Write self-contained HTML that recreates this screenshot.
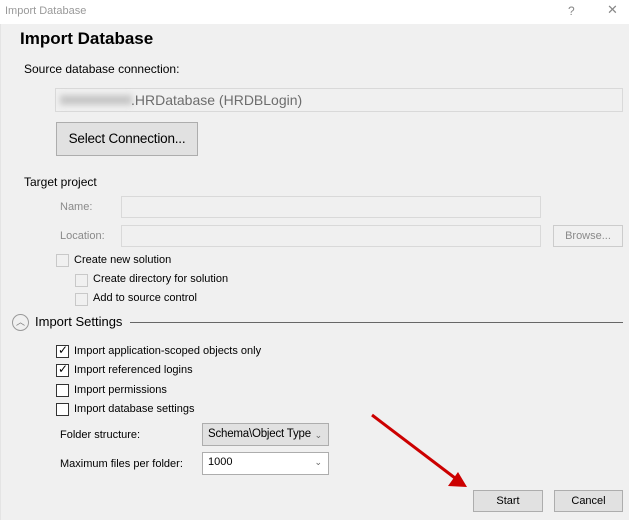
<!DOCTYPE html><html><head><style>
body{margin:0;width:631px;height:520px;background:#fff;font-family:"Liberation Sans",sans-serif;font-size:12px;color:#000;position:relative;overflow:hidden}
div,span{position:absolute;box-sizing:border-box}
.t{white-space:nowrap;line-height:14px}
.g{color:#8a8a8a}
.in{border:1px solid #d9d9d9;background:#f0f0f0}
.btn{border:1px solid #adadad;background:#e1e1e1;text-align:center}
.cb{width:13px;height:13px;border:1px solid #333;background:#fff}
.cbd{width:13px;height:13px;border:1px solid #c8c8c8;background:#f0f0f0}
</style></head><body>
<div class="t g" style="left:5px;top:4px;font-size:11px;color:#999">Import Database</div>
<div class="t" style="left:568px;top:4px;color:#888">?</div>
<div class="t" style="left:607px;top:3px;color:#888;font-size:13px">✕</div>
<div style="left:0;top:24px;width:629px;height:496px;background:#f0f0f0;border-left:1px solid #e4e4e4"></div>
<div class="t" style="left:20px;top:29px;font-size:17px;font-weight:bold;line-height:20px">Import Database</div>
<div class="t" style="left:24px;top:62px">Source database connection:</div>
<div class="in" style="left:55px;top:88px;width:568px;height:24px"></div>
<div style="left:60px;top:95px;width:72px;height:10px;background:#c8c8c8;filter:blur(3px)"></div>
<div class="t" style="left:131px;top:92px;font-size:14px;line-height:16px;color:#6d6d6d">.HRDatabase (HRDBLogin)</div>
<div class="btn" style="left:56px;top:122px;width:142px;height:34px;line-height:32px;font-size:13.5px;letter-spacing:-0.2px">Select Connection...</div>
<div class="t" style="left:24px;top:175px">Target project</div>
<div class="t g" style="left:60px;top:200px;font-size:11px">Name:</div>
<div class="in" style="left:121px;top:196px;width:420px;height:22px"></div>
<div class="t g" style="left:60px;top:229px;font-size:11px">Location:</div>
<div class="in" style="left:121px;top:225px;width:420px;height:22px"></div>
<div class="in t g" style="left:553px;top:225px;width:70px;height:22px;line-height:20px;text-align:center;font-size:11px;border-color:#ccc">Browse...</div>
<div class="cbd" style="left:56px;top:254px"></div><div class="t" style="left:74px;top:253px;font-size:11px">Create new solution</div>
<div class="cbd" style="left:75px;top:274px"></div><div class="t" style="left:93px;top:272px;font-size:11px">Create directory for solution</div>
<div class="cbd" style="left:75px;top:293px"></div><div class="t" style="left:93px;top:291px;font-size:11px">Add to source control</div>
<div style="left:12px;top:314px;width:17px;height:17px;border:1px solid #999;border-radius:50%;font-size:9px;color:#777;text-align:center;line-height:15px">︿</div>
<div class="t" style="left:35px;top:315px;font-size:13px">Import Settings</div>
<div style="left:130px;top:322px;width:493px;height:1px;background:#666"></div>
<div class="cb" style="left:56px;top:345px"></div><div class="t" style="left:58px;top:343px;font-size:12px">✓</div><div class="t" style="left:74px;top:344px;font-size:11px">Import application-scoped objects only</div>
<div class="cb" style="left:56px;top:364px"></div><div class="t" style="left:58px;top:362px;font-size:12px">✓</div><div class="t" style="left:74px;top:363px;font-size:11px">Import referenced logins</div>
<div class="cb" style="left:56px;top:384px"></div><div class="t" style="left:74px;top:383px;font-size:11px">Import permissions</div>
<div class="cb" style="left:56px;top:403px"></div><div class="t" style="left:74px;top:402px;font-size:11px">Import database settings</div>
<div class="t" style="left:60px;top:428px;font-size:11px">Folder structure:</div>
<div class="btn t" style="left:202px;top:423px;width:127px;height:23px;text-align:left;padding-left:5px;line-height:20px;font-size:11.5px;letter-spacing:-0.2px">Schema\Object Type<span style="right:6px;top:1px;font-size:9px;color:#666">⌄</span></div>
<div class="t" style="left:60px;top:457px;font-size:11px">Maximum files per folder:</div>
<div class="t" style="left:202px;top:452px;width:127px;height:23px;border:1px solid #adadad;background:#fff;padding-left:5px;line-height:18px;font-size:11px">1000<span style="right:6px;top:0;font-size:9px;color:#666">⌄</span></div>
<svg style="position:absolute;left:0;top:0" width="631" height="520"><line x1="372" y1="415" x2="455" y2="478" stroke="#c00" stroke-width="3"/><polygon points="467,487 448,486 458,472" fill="#c00"/></svg>
<div class="btn t" style="left:473px;top:490px;width:70px;height:22px;line-height:20px;font-size:11px">Start</div>
<div class="btn t" style="left:554px;top:490px;width:69px;height:22px;line-height:20px;font-size:11px">Cancel</div>
</body></html>
